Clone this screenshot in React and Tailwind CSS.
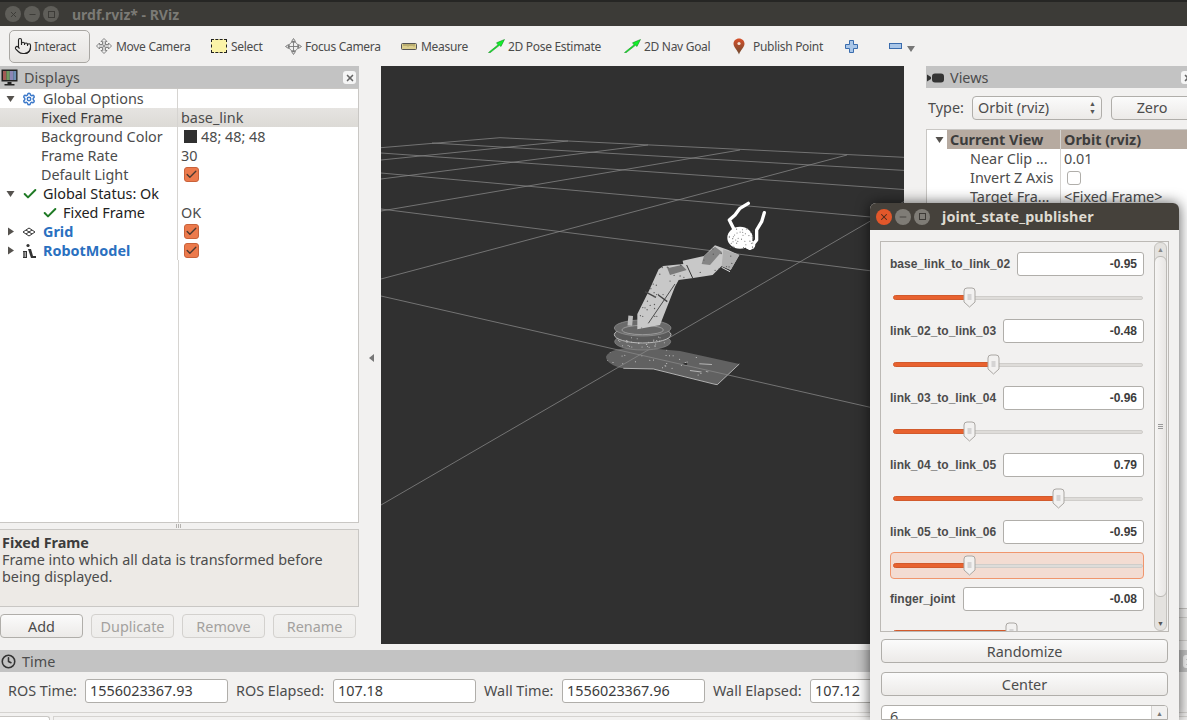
import React from 'react';
import { Settings, Check, Pointer, Minus, X, Clock } from 'lucide-react';

const UI = "[font-family:'Noto_Sans',sans-serif]";

const Arrow = ({ down }) => (
  <svg width="9" height="9" viewBox="0 0 9 9" className="shrink-0">
    {down ? <path d="M0.5 2 L8.5 2 L4.5 8 Z" fill="#55524e" /> : <path d="M2 0.5 L8 4.5 L2 8.5 Z" fill="#55524e" />}
  </svg>
);

const Checkbox = () => (
  <div className="w-[15px] h-[15px] rounded-[3px] bg-[#ec7a4c] border border-[#c9623a] flex items-center justify-center">
    <Check size={13} strokeWidth={2.5} color="#4a3a32" />
  </div>
);

const CloseBtn = ({ className }) => (
  <div className={`w-[13px] h-[13px] rounded-[3px] bg-[#f5f5f5] flex items-center justify-center shrink-0 ${className || ''}`}>
    <X size={10} strokeWidth={4} color="#666" />
  </div>
);

const GreenCheck = () => <Check size={16} strokeWidth={3} color="#1f7a25" className="shrink-0" />;

const GridIcon = () => (
  <svg width="14" height="10" viewBox="0 0 14 10" fill="none" stroke="#333" strokeWidth="1">
    <path d="M7 1 L13 5 L7 9 L1 5 Z M4 3 L10 7 M10 3 L4 7" />
  </svg>
);

const RobotIcon = () => (
  <svg width="16" height="16" viewBox="0 0 16 16">
    <circle cx="6" cy="2.5" r="1.6" fill="#333" />
    <path d="M1 15 V8 H5 V15 Z M6 6 H9 L11 13 H14 V15 H9 L7 9 Z" fill="#333" />
    <path d="M2 9 V14 M3.5 9 V14" stroke="#ddd" strokeWidth="0.7" />
  </svg>
);

const MonitorIcon = () => (
  <svg width="17" height="17" viewBox="0 0 17 17">
    <rect x="0.5" y="0.5" width="16" height="12" fill="#222" />
    <rect x="2" y="2" width="3.4" height="9" fill="#a35a55" />
    <rect x="5.4" y="2" width="3.4" height="9" fill="#6f9a5f" />
    <rect x="8.8" y="2" width="3.4" height="9" fill="#8c86b5" />
    <rect x="12.2" y="2" width="3" height="9" fill="#6f8fb5" />
    <rect x="6.5" y="13" width="4" height="2" fill="#222" />
    <rect x="3.5" y="15" width="10" height="1.5" fill="#222" />
  </svg>
);

const CameraIcon = () => (
  <svg width="17" height="10" viewBox="0 0 17 10">
    <path d="M0 1.5 L4 4 V6 L0 8.5 Z" fill="#333" />
    <rect x="5" y="0.5" width="12" height="9" rx="3" fill="#333" />
  </svg>
);

const MoveIcon = () => (
  <svg width="16" height="16" viewBox="0 0 16 16" fill="#eee" stroke="#777" strokeWidth="0.9">
    <path d="M8 0.5 L11 3.5 H9.5 V6.5 H12.5 V5 L15.5 8 L12.5 11 V9.5 H9.5 V12.5 H11 L8 15.5 L5 12.5 H6.5 V9.5 H3.5 V11 L0.5 8 L3.5 5 V6.5 H6.5 V3.5 H5 Z" />
    <path d="M6.5 6.5 L9.5 9.5 M9.5 6.5 L6.5 9.5 M8 3 V13 M3 8 H13" strokeWidth="0.5" />
  </svg>
);

const FocusIcon = () => (
  <svg width="17" height="17" viewBox="0 0 17 17" fill="none" stroke="#777" strokeWidth="0.9">
    <circle cx="8.5" cy="8.5" r="4.5" fill="#eee" />
    <path d="M8.5 0.5 L10.5 3.5 H6.5 Z M8.5 16.5 L10.5 13.5 H6.5 Z M0.5 8.5 L3.5 6.5 V10.5 Z M16.5 8.5 L13.5 6.5 V10.5 Z" fill="#ddd" />
    <path d="M8.5 3 V14 M3 8.5 H14" />
  </svg>
);

const MeasureIcon = () => (
  <svg width="16" height="7" viewBox="0 0 16 7">
    <rect x="0.5" y="0.5" width="15" height="6" rx="1" fill="#dccf8e" stroke="#555" />
    <path d="M3 1 V3 M5 1 V3 M7 1 V3.5 M9 1 V3 M11 1 V3 M13 1 V3.5" stroke="#6b6130" strokeWidth="0.6" />
  </svg>
);

const Arrow2D = () => (
  <svg width="17" height="14" viewBox="0 0 17 14" className="shrink-0">
    <path d="M0.5 13.5 L10 5.8 L8.5 3.8 L16.5 0.5 L13 7.5 L11.5 6.3 L2 13.8 Z" fill="#12f02a" stroke="#0d7a18" strokeWidth="0.5" />
  </svg>
);

const PinIcon = () => (
  <svg width="12" height="17" viewBox="0 0 12 17">
    <defs>
      <linearGradient id="pin" x1="0" y1="0" x2="0" y2="1">
        <stop offset="0" stopColor="#d8502a" />
        <stop offset="1" stopColor="#6b4a30" />
      </linearGradient>
    </defs>
    <path d="M6 0.5 C9.2 0.5 11.5 2.8 11.5 5.8 C11.5 9.5 7.5 12 6 16.5 C4.5 12 0.5 9.5 0.5 5.8 C0.5 2.8 2.8 0.5 6 0.5 Z" fill="url(#pin)" />
    <circle cx="6" cy="5.5" r="1.6" fill="#f4e4d8" />
  </svg>
);

const PlusIcon = () => (
  <svg width="13" height="13" viewBox="0 0 13 13" className="shrink-0">
    <path d="M4.5 0.5 H8.5 V4.5 H12.5 V8.5 H8.5 V12.5 H4.5 V8.5 H0.5 V4.5 H4.5 Z" fill="#a9c6e8" stroke="#3a6cad" />
  </svg>
);

const MinusIcon = () => (
  <svg width="13" height="6" viewBox="0 0 13 6" className="shrink-0">
    <rect x="0.5" y="0.5" width="12" height="5" fill="#a9c6e8" stroke="#3a6cad" />
  </svg>
);

const SelectIcon = () => (
  <div className="w-[16px] h-[14px] bg-[#fbf3a8] border border-dashed border-[#222]" />
);

const ToolItem = ({ icon, label, w, active }) => (
  <div
    className={`flex items-center h-[33px] whitespace-nowrap text-[12px] tracking-[-0.3px] text-[#4c4c4c] shrink-0 ${w} ${active ? 'border border-[#a9a7a3] rounded-[5px] bg-gradient-to-b from-[#f4f3f2] to-[#e6e4e1] pl-[4px]' : ''}`}
  >
    <div className="w-[20px] shrink-0 flex items-center">{icon}</div>
    <span className="pt-[2px]">{label}</span>
  </div>
);

const DockHeader = ({ icon, title, close }) => (
  <div className="h-[22px] bg-[#c3c3c3] flex items-center pl-[1px] pr-[3px] pt-px gap-[6px] text-[14.4px] text-[#4c4c4c] shrink-0">
    {icon}
    <span className="flex-1">{title}</span>
    {close}
  </div>
);

const TreeRow = ({ selected, arrow, indent, icon, label, labelClass, value, check }) => (
  <div className={`h-[19px] flex text-[14.4px] leading-[19px] whitespace-nowrap ${selected ? 'bg-gradient-to-b from-[#e6e4e1] to-[#dcdad6]' : ''}`}>
    <div className="w-[178px] shrink-0 flex items-center border-r border-[#d6d4d1] overflow-hidden" style={{ paddingLeft: indent }}>
      {arrow && <div className="w-[16px] shrink-0 flex"><Arrow down={arrow === 'down'} /></div>}
      {icon && <div className="w-[21px] shrink-0 flex items-center">{icon}</div>}
      <span className={labelClass || 'text-[#4c4c4c]'}>{label}</span>
    </div>
    <div className="flex-1 pl-[3px] flex items-center text-[#4c4c4c]">
      {check ? <div className="pl-[3px]"><Checkbox /></div> : value}
    </div>
  </div>
);

const Btn = ({ w, disabled, children }) => (
  <div className={`h-[24px] ${w} rounded-[4px] border flex items-center justify-center pt-px text-[14.4px] bg-gradient-to-b ${disabled ? 'border-[#d3d1ce] from-[#f2f1f0] to-[#eeedeb] text-[#a3a19e]' : 'border-[#b0aeaa] from-[#fbfbfb] to-[#eceae8] text-[#4c4c4c]'}`}>
    {children}
  </div>
);

const TimeField = ({ label, value, lw, w }) => (
  <>
    <span className={`${lw} text-[14.4px] leading-[24px] text-[#4c4c4c] whitespace-nowrap shrink-0`}>{label}</span>
    <div className={`${w} h-[24px] bg-white border border-[#b0aeaa] rounded-[3px] text-[14.4px] text-[#3c3c3c] pl-[4px] leading-[22px] shrink-0`}>{value}</div>
  </>
);

// grid on the ground plane, page coordinates
const gridLines = [
  [381, 147.7, 500, 137.7], [500, 137.7, 904, 157.3],
  [568, 141, 381, 160], [648, 145, 381, 179], [740, 150, 381, 211], [847, 155, 381, 279], [904, 201.5, 381, 505],
  [432, 143, 904, 170.4], [381, 153, 904, 189.5], [381, 173, 904, 220], [381, 209, 904, 275], [381, 296, 904, 415],
];

function speckle(n, x0, y0, w, h, seed) {
  const out = [];
  let s = seed;
  for (let i = 0; i < n; i++) {
    s = (s * 9301 + 49297) % 233280;
    const x = x0 + (s / 233280) * w;
    s = (s * 9301 + 49297) % 233280;
    const y = y0 + (s / 233280) * h;
    out.push([x, y]);
  }
  return out;
}

const PLATE = 'M78 500 C85 480 130 470 200 474 L300 483 L478 522 L412 584 L220 537 L130 535 C100 530 78 515 78 500 Z';
const ARM = 'M172 418 L172 372 L208 300 L236 238 L250 228 L310 222 L308 212 L372 198 L405 166 L445 180 L478 195 L452 240 L425 228 L398 255 L335 265 L296 270 L285 290 L240 405 Z';

const RobotPlate = () => (
  <g transform="translate(580 190) scale(0.3333)">
    <clipPath id="plate-clip"><path d={PLATE} /></clipPath>
    <path d={PLATE} fill="#616161" />
    <path d="M130 535 L220 537 L405 583 L412 584 L478 522" fill="none" stroke="#c4c4c4" strokeWidth="2.5" />
    <g clipPath="url(#plate-clip)">
      {speckle(60, 80, 470, 400, 115, 7).map(([x, y], i) => <circle key={i} cx={x} cy={y} r="1.5" fill="#dedede" />)}
    </g>
    <rect x="358" y="520" width="38" height="3" fill="#b5b5b5" transform="rotate(3 358 520)" />
    <rect x="330" y="540" width="35" height="3" fill="#b5b5b5" transform="rotate(8 330 540)" />
    <ellipse cx="316" cy="522" rx="6" ry="3" fill="#222" />
  </g>
);

const RobotArm = () => (
  <g transform="translate(580 190) scale(0.3333)">
    {/* drum */}
    <ellipse cx="188" cy="455" rx="84" ry="25" fill="#6a6a6a" stroke="#8c8c8c" strokeWidth="2" />
    <ellipse cx="188" cy="434" rx="85" ry="25" fill="#5a5a5a" stroke="#b8b8b8" strokeWidth="3" />
    <ellipse cx="188" cy="414" rx="85" ry="24" fill="#6a6a6a" stroke="#9a9a9a" strokeWidth="2" />
    <ellipse cx="188" cy="420" rx="62" ry="14" fill="#666" stroke="#b4b4b4" strokeWidth="2" />
    {speckle(30, 110, 440, 150, 35, 11).map(([x, y], i) => <circle key={i} cx={x} cy={y} r="1.5" fill="#ccc" />)}
    {/* links */}
    <rect x="144" y="377" width="14" height="30" fill="#bbb" transform="rotate(5 150 390)" />
    <clipPath id="arm-clip"><path d={ARM} /></clipPath>
    <path d={ARM} fill="#c8c8c8" />
    <path d="M262 235 L305 225 L320 240 L270 255 Z" fill="#7a7a7a" />
    <path d="M372 198 L405 170 L425 185 L390 225 L365 222 Z" fill="#858585" />
    <path d="M430 178 L478 195 L452 240 L425 228 Z" fill="#b0b0b0" />
    <path d="M195 305 L228 322 M235 315 L262 335" stroke="#444" strokeWidth="4" />
    <path d="M205 400 L285 282" stroke="#333" strokeWidth="2.5" />
    <path d="M320 225 L338 264" stroke="#333" strokeWidth="3" />
    <path d="M425 232 L450 245" stroke="#e4e4e4" strokeWidth="3" />
    <g clipPath="url(#arm-clip)">
      {speckle(130, 170, 170, 310, 250, 19).map(([x, y], i) => <circle key={i} cx={x} cy={y} r="2" fill="#5a5a5a" />)}
    </g>
    {/* gripper */}
    <path d="M505 40 L480 55 L465 75 L448 90 L462 118 M553 68 L545 95 L530 120 L530 150 L510 175" fill="none" stroke="#fff" strokeWidth="10" strokeLinejoin="round" strokeLinecap="round" />
    <ellipse cx="480" cy="143" rx="38" ry="33" fill="#fff" />
    <ellipse cx="510" cy="165" rx="16" ry="14" fill="#fff" />
    {speckle(38, 446, 116, 76, 60, 3).map(([x, y], i) => <circle key={i} cx={x} cy={y} r="1.6" fill="#666" />)}
  </g>
);

const joints = [
  { name: 'base_link_to_link_02', value: '-0.95', inputW: 'w-[127px]', fill: 76 },
  { name: 'link_02_to_link_03', value: '-0.48', inputW: 'w-[141px]', fill: 100 },
  { name: 'link_03_to_link_04', value: '-0.96', inputW: 'w-[141px]', fill: 76 },
  { name: 'link_04_to_link_05', value: '0.79', inputW: 'w-[141px]', fill: 165 },
  { name: 'link_05_to_link_06', value: '-0.95', inputW: 'w-[141px]', fill: 76, active: true },
  { name: 'finger_joint', value: '-0.08', inputW: 'w-[181px]', fill: 118 },
];

const SliderThumb = () => (
  <svg width="13" height="21" viewBox="0 0 13 21" className="shrink-0 -mx-[6px] z-10">
    <path d="M1 4 Q1 1 4 1 H9 Q12 1 12 4 V15 L6.5 20 L1 15 Z" fill="#f2f1f0" stroke="#aaa7a3" />
    <path d="M4.5 8 H8.5 M4.5 10 H8.5 M4.5 12 H8.5" stroke="#aaa" strokeWidth="0.8" />
  </svg>
);

const JointRow = ({ joint }) => (
  <div className="h-[67px] shrink-0">
    <div className="h-[24px] flex items-center justify-between">
      <span className="font-['Liberation_Sans',sans-serif] font-bold text-[12px] text-[#4c4c4c] whitespace-nowrap">{joint.name}</span>
      <div className={`${joint.inputW} h-[24px] bg-white border border-[#b0aeaa] rounded-[3px] text-right pr-[6px] font-['Liberation_Sans',sans-serif] font-bold text-[12px] leading-[22px] text-[#3c3c3c]`}>{joint.value}</div>
    </div>
    <div className={`mt-[8px] h-[27px] flex items-center pl-[2px] rounded-[4px] border ${joint.active ? 'bg-[#f3dcd2] border-[#f0966d]' : 'border-transparent'}`}>
      <div className="h-[5px] rounded-l-[3px] bg-[#e8622f] border border-[#d25a2c] shrink-0" style={{ width: joint.fill }} />
      <SliderThumb />
      <div className="flex-1 h-[4px] rounded-r-[3px] bg-[#dedcd9] border border-[#cfcdca]" />
    </div>
  </div>
);

const JointWindow = () => (
  <div className={`absolute left-[870px] top-[203px] w-[309px] h-[517px] rounded-t-[6px] bg-[#f2f1f0] shadow-[0_0_14px_rgba(0,0,0,0.65)] flex flex-col ${UI}`}>
    <div className="h-[27px] rounded-t-[6px] bg-[#45413b] flex items-center pl-[6px] shrink-0">
      <div className="w-[16px] h-[16px] rounded-full bg-[#e2572a] flex items-center justify-center"><X size={10} strokeWidth={2.5} color="#4a2a1c" /></div>
      <div className="w-[16px] h-[16px] rounded-full bg-[#7f7c76] ml-[3px] flex items-center justify-center"><Minus size={10} strokeWidth={2} color="#3d3a36" /></div>
      <div className="w-[16px] h-[16px] rounded-full bg-[#7f7c76] ml-[3px] flex items-center justify-center"><div className="w-[7px] h-[7px] border border-[#3d3a36]" /></div>
      <span className="ml-[12px] text-[14.4px] font-bold text-[#dfdbd2] tracking-[0.1px]">joint_state_publisher</span>
    </div>
    <div className="mt-[11px] mx-[10px] h-[391px] border border-[#bcb9b5] flex shrink-0 overflow-hidden">
      <div className="w-[254px] shrink-0 ml-[9px] pt-[10px] flex flex-col">
        {joints.map(j => <JointRow key={j.name} joint={j} />)}
      </div>
      <div className="ml-[10px] w-[13px] h-[389px] rounded-[6px] border border-[#c4c2be] bg-[#e4e2df] flex flex-col items-center shrink-0">
        <div className="h-[13px] text-[7px] leading-[13px] text-[#888]">▲</div>
        <div className="w-[13px] h-[341px] -mx-[1px] rounded-[6px] border border-[#bbb9b5] bg-gradient-to-r from-[#f6f5f4] to-[#e8e6e4] flex flex-col items-center justify-center gap-[1px] shrink-0">
          <div className="w-[5px] h-px bg-[#999]" /><div className="w-[5px] h-px bg-[#999]" /><div className="w-[5px] h-px bg-[#999]" />
        </div>
        <div className="flex-1" />
        <div className="h-[13px] text-[7px] leading-[13px] text-[#555]">▼</div>
      </div>
    </div>
    <div className="mx-[11px] mt-[7px] h-[24px] rounded-[4px] border border-[#b0aeaa] bg-gradient-to-b from-[#fbfbfb] to-[#eceae8] text-[14.4px] text-[#4c4c4c] flex items-center justify-center pt-px shrink-0">Randomize</div>
    <div className="mx-[11px] mt-[9px] h-[24px] rounded-[4px] border border-[#b0aeaa] bg-gradient-to-b from-[#fbfbfb] to-[#eceae8] text-[14.4px] text-[#4c4c4c] flex items-center justify-center pt-px shrink-0">Center</div>
    <div className="mx-[11px] mt-[9px] flex-1 rounded-t-[4px] border border-[#b0aeaa] bg-white text-[14.4px] text-[#4c4c4c] flex pl-[8px] overflow-hidden">
      <span className="flex-1">6</span>
      <div className="w-[16px] border-l border-[#d5d3d0] bg-[#f2f1f0] text-[7px] text-[#777] text-center leading-[16px]">▲</div>
    </div>
  </div>
);

export default function App() {
  return (
    <div className={`relative w-[1187px] h-[720px] overflow-hidden bg-[#f2f1f0] flex flex-col ${UI}`}>
      {/* title bar */}
      <div className="h-[26px] shrink-0 bg-[#3c3b37] border-t-2 border-[#262624] flex items-center pl-[5px]">
        <div className="w-[16px] h-[16px] rounded-full bg-[#5f5e59] flex items-center justify-center"><X size={9} strokeWidth={2.5} color="#3c3b37" /></div>
        <div className="w-[16px] h-[16px] rounded-full bg-[#5f5e59] ml-[3px] flex items-center justify-center"><Minus size={9} strokeWidth={2.5} color="#3c3b37" /></div>
        <div className="w-[16px] h-[16px] rounded-full bg-[#5f5e59] ml-[3px] flex items-center justify-center"><div className="w-[7px] h-[7px] border border-[#3c3b37]" /></div>
        <span className="ml-[13px] text-[14px] font-bold text-[#7b7a75]">urdf.rviz* - RViz</span>
      </div>

      {/* toolbar */}
      <div className="h-[40px] shrink-0 flex items-center pl-[9px]">
        <ToolItem w="w-[81px]" active icon={<Pointer size={18} strokeWidth={1.5} color="#222" />} label="Interact" />
        <div className="w-[6px] shrink-0" />
        <ToolItem w="w-[115px]" icon={<MoveIcon />} label="Move Camera" />
        <ToolItem w="w-[74px]" icon={<SelectIcon />} label="Select" />
        <ToolItem w="w-[116px]" icon={<FocusIcon />} label="Focus Camera" />
        <ToolItem w="w-[87px]" icon={<MeasureIcon />} label="Measure" />
        <ToolItem w="w-[136px]" icon={<Arrow2D />} label="2D Pose Estimate" />
        <ToolItem w="w-[109px]" icon={<Arrow2D />} label="2D Nav Goal" />
        <ToolItem w="w-[112px]" icon={<PinIcon />} label="Publish Point" />
        <PlusIcon />
        <div className="w-[31px] shrink-0" />
        <MinusIcon />
        <div className="ml-[5px] mt-[6px] w-0 h-0 border-l-[4px] border-r-[4px] border-t-[6px] border-l-transparent border-r-transparent border-t-[#777]" />
      </div>

      {/* main area */}
      <div className="h-[584px] shrink-0 flex">
        {/* displays */}
        <div className="w-[359px] shrink-0 flex flex-col">
          <DockHeader icon={<MonitorIcon />} title="Displays" close={<CloseBtn />} />
          <div className="h-[435px] bg-white border border-[#c9c7c4] border-l-0 shrink-0">
            <TreeRow indent={6} arrow="down" icon={<Settings size={14} strokeWidth={2.5} color="#3b78c9" />} label="Global Options" />
            <TreeRow indent={41} selected label="Fixed Frame" labelClass="text-[#3c3c3c]" value="base_link" />
            <TreeRow indent={41} label="Background Color" value={<><div className="w-[13px] h-[13px] bg-[#303030] mx-[3px]" /><span className="ml-[1px]">48; 48; 48</span></>} />
            <TreeRow indent={41} label="Frame Rate" value="30" />
            <TreeRow indent={41} label="Default Light" check />
            <TreeRow indent={6} arrow="down" icon={<GreenCheck />} label="Global Status: Ok" labelClass="text-[#222]" />
            <TreeRow indent={42} icon={<GreenCheck />} label="Fixed Frame" labelClass="text-[#222]" value="OK" />
            <TreeRow indent={6} arrow="right" icon={<GridIcon />} label="Grid" labelClass="font-bold text-[#2a70c0]" check />
            <TreeRow indent={6} arrow="right" icon={<RobotIcon />} label="RobotModel" labelClass="font-bold text-[#2a70c0]" check />
            <div className="h-[262px] ml-[178px] border-l border-[#d6d4d1]" />
          </div>
          <div className="h-[6px] flex justify-center items-center gap-px shrink-0 pr-[2px]">
            <div className="w-px h-[4px] bg-[#b5b3b0]" /><div className="w-px h-[4px] bg-[#b5b3b0]" /><div className="w-px h-[4px] bg-[#b5b3b0]" />
          </div>
          <div className="h-[78px] shrink-0 bg-[#edeae6] border border-[#c9c7c4] border-l-0 pl-[2px] pt-[4px] text-[14.4px] leading-[17px] text-[#4c4c4c]">
            <div className="font-bold text-[#3c3c3c]">Fixed Frame</div>
            <div className="w-[345px]">Frame into which all data is transformed before being displayed.</div>
          </div>
          <div className="mt-[7px] flex gap-[8px]">
            <Btn w="w-[83px]">Add</Btn>
            <Btn w="w-[83px]" disabled>Duplicate</Btn>
            <Btn w="w-[83px]" disabled>Remove</Btn>
            <Btn w="w-[83px]" disabled>Rename</Btn>
          </div>
        </div>

        {/* left splitter */}
        <div className="w-[22px] shrink-0 flex items-center pl-[10px]">
          <div className="w-0 h-0 border-t-[4px] border-b-[4px] border-r-[5px] border-t-transparent border-b-transparent border-r-[#777]" />
        </div>

        {/* 3D view */}
        <div className="w-[523px] h-[578px] shrink-0 bg-[#303030]">
          <svg width="523" height="578" viewBox="381 66 523 578">
            <RobotPlate />
            {gridLines.map((l, i) => (
              <line key={i} x1={l[0]} y1={l[1]} x2={l[2]} y2={l[3]} stroke="#8a8a8a" strokeOpacity="0.75" strokeWidth="1" />
            ))}
            <RobotArm />
          </svg>
        </div>

        {/* views */}
        <div className="ml-[22px] flex-1 min-w-0 flex flex-col">
          <DockHeader icon={<CameraIcon />} title="Views" close={<CloseBtn className="-mr-[10px]" />} />
          <div className="mt-[8px] h-[24px] flex items-center pl-[2px] text-[14.4px] text-[#4c4c4c] shrink-0">
            <span className="w-[44px] shrink-0">Type:</span>
            <div className="w-[130px] h-[24px] shrink-0 rounded-[4px] border border-[#b0aeaa] bg-gradient-to-b from-[#fbfbfb] to-[#eceae8] flex items-center pl-[5px] justify-between pr-[5px]">
              <span>Orbit (rviz)</span>
              <span className="text-[7px] leading-[8px] text-[#555]">▲<br />▼</span>
            </div>
            <div className="ml-[9px] w-[82px] h-[24px] rounded-[4px] border border-[#b0aeaa] bg-gradient-to-b from-[#fbfbfb] to-[#eceae8] flex items-center justify-center shrink-0">Zero</div>
          </div>
          <div className="mt-[9px] h-[480px] w-[280px] bg-white border border-[#c9c7c4] shrink-0">
            <div className="h-[19px] flex text-[14.4px] leading-[19px] font-bold text-[#3c3c3c]">
              <div className="w-[20px] bg-white pl-[8px] flex items-center"><Arrow down /></div>
              <div className="w-[114px] pl-[3px] bg-[#b6aaa0] border-r border-[#d6d4d1]">Current View</div>
              <div className="flex-1 pl-[3px] bg-[#b6aaa0]">Orbit (rviz)</div>
            </div>
            {[['Near Clip ...', '0.01'], ['Invert Z Axis', null], ['Target Fra...', '<Fixed Frame>']].map(([k, v]) => (
              <div key={k} className="h-[19px] flex text-[14.4px] leading-[19px] text-[#4c4c4c]">
                <div className="w-[134px] pl-[43px] border-r border-[#d6d4d1] whitespace-nowrap">{k}</div>
                <div className="pl-[3px] flex items-center">
                  {v || <div className="ml-[3px] w-[14px] h-[14px] rounded-[3px] border border-[#b0aeaa] bg-white" />}
                </div>
              </div>
            ))}
          </div>
          <div className="mt-[8px] h-[24px] w-[280px] rounded-[4px] border border-[#d3d1ce] bg-[#eeedeb] shrink-0" />
        </div>
      </div>

      {/* time panel */}
      <DockHeader icon={<Clock size={15} strokeWidth={2.5} color="#333" />} title="Time" close={<CloseBtn className="-mr-[12px]" />} />
      <div className="h-[40px] shrink-0 flex items-start pt-[7px] pl-[8px]">
        <TimeField lw="w-[77px]" w="w-[143px]" label="ROS Time:" value="1556023367.93" />
        <div className="w-[8px] shrink-0" />
        <TimeField lw="w-[97px]" w="w-[143px]" label="ROS Elapsed:" value="107.18" />
        <div className="w-[8px] shrink-0" />
        <TimeField lw="w-[78px]" w="w-[143px]" label="Wall Time:" value="1556023367.96" />
        <div className="w-[8px] shrink-0" />
        <TimeField lw="w-[97px]" w="w-[143px]" label="Wall Elapsed:" value="107.12" />
      </div>
      <div className="flex-1 flex border-t border-[#d5d3d0] pt-[3px] gap-[3px]">
        <div className="w-[50px] border-t border-r border-[#c9c7c4] rounded-tr-[3px] bg-white" />
        <div className="flex-1 border-t border-l border-[#d5d3d0]" />
      </div>

      <JointWindow />
    </div>
  );
}
